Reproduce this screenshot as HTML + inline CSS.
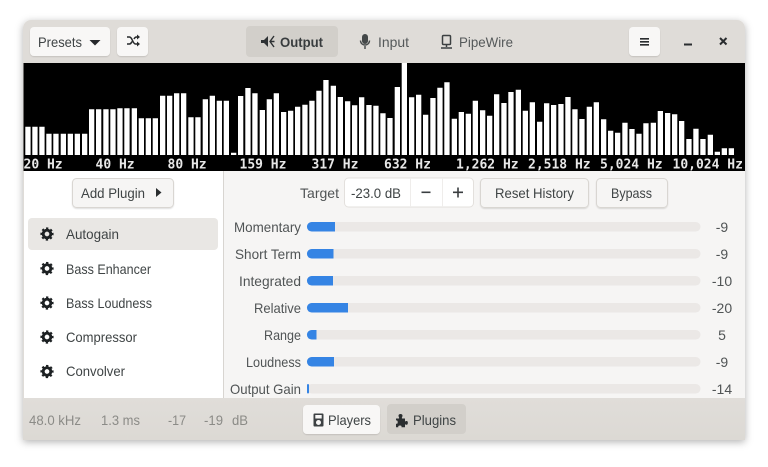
<!DOCTYPE html>
<html lang="en">
<head>
<meta charset="utf-8">
<title>EasyEffects</title>
<style>
html,body{margin:0;padding:0;width:768px;height:467px;background:#fff;overflow:hidden}
svg{display:block;position:absolute;left:0;top:0;filter:blur(0.35px)}
text{font-family:"Liberation Sans",sans-serif;font-size:14px;fill:#3f4445}
.dim{fill:#8b8b87}
.mono{font-family:"DejaVu Sans Mono",monospace;font-size:13px;font-weight:bold;fill:#e8e8e8}
.r{text-anchor:end}
.m{text-anchor:middle}
.track{fill:#ebe8e6}
.fill{fill:#3584e4}
</style>
</head>
<body>
<svg width="768" height="467" viewBox="0 0 768 467" xmlns="http://www.w3.org/2000/svg">
<defs>
<filter id="sh" x="-10%" y="-10%" width="120%" height="120%"><feDropShadow dx="0" dy="2" stdDeviation="4" flood-color="#000" flood-opacity=".3"/></filter>
<filter id="bs" x="-10%" y="-20%" width="120%" height="140%"><feDropShadow dx="0" dy="1" stdDeviation=".6" flood-color="#000" flood-opacity=".12"/></filter>
<linearGradient id="foot" x1="0" y1="0" x2="0" y2="1"><stop offset="0" stop-color="#e0ddd9"/><stop offset="1" stop-color="#dcd9d4"/></linearGradient>
<g id="gear">
<circle r="3.800" fill="none" stroke="#1c2022" stroke-width="2.900"/>
<circle r="5.600" fill="none" stroke="#1c2022" stroke-width="2" stroke-dasharray="2.200 2.198" transform="rotate(-11)"/>
</g>
</defs>

<!-- window -->
<path d="M23 28a8 8 0 0 1 8-8h706a8 8 0 0 1 8 8v412H23z" fill="#dfdcd8" filter="url(#sh)"/>
<rect x="24" y="171" width="199" height="227" fill="#fff"/>
<rect x="223" y="171" width="522" height="227" fill="#f6f5f4"/>
<rect x="223" y="171" width="1" height="227" fill="#d8d5d1"/>
<rect x="23" y="398" width="722" height="42" fill="url(#foot)"/>

<!-- header -->
<rect x="30" y="27" width="80" height="29" rx="4" fill="#f8f7f6" filter="url(#bs)"/>
<text x="38" y="47" textLength="44" lengthAdjust="spacingAndGlyphs">Presets</text>
<path d="M89.500 40h11l-5.500 5.500z" fill="#26292b"/>
<rect x="117" y="27" width="31" height="29" rx="4" fill="#f8f7f6" filter="url(#bs)"/>
<path d="M127 37h2.500c3 0 3 7 6 7h2M127 44h2.500c1.200 0 1.900-1.200 2.500-2.500M134 39c.5-1 1.200-2 2.500-2h1.500" fill="none" stroke="#26292b" stroke-width="1.500"/>
<path d="M137 34.500l3 2.500-3 2.500zM137 41.500l3 2.500-3 2.500z" fill="#26292b"/>

<rect x="246" y="26" width="92" height="31" rx="4" fill="#d2cfca"/>
<path d="M261 40h3l4-4v11l-4-4h-3z" fill="#2e3234"/>
<path d="M274 36l-4 5.500 4 5.500M270.500 41.500h4" fill="none" stroke="#2e3234" stroke-width="1.400"/>
<text x="280" y="47" textLength="43" lengthAdjust="spacingAndGlyphs" font-weight="bold" style="font-weight:bold;fill:#383c3e">Output</text>

<rect x="362" y="34" width="6" height="10" rx="3" fill="#444849"/>
<path d="M360.500 40.500c0 6 9 6 9 0M365 46v3" fill="none" stroke="#444849" stroke-width="1.400"/>
<text x="378" y="47" textLength="31" lengthAdjust="spacingAndGlyphs" style="fill:#55595a">Input</text>

<rect x="442.500" y="35.500" width="8" height="9" rx="1" fill="none" stroke="#3c4042" stroke-width="1.500"/>
<path d="M446.500 45v2M441 48h11" stroke="#3c4042" stroke-width="1.500" fill="none"/>
<text x="459" y="47" textLength="54" lengthAdjust="spacingAndGlyphs" style="fill:#55595a">PipeWire</text>

<rect x="629" y="27" width="31" height="29" rx="4" fill="#f8f7f6" filter="url(#bs)"/>
<path d="M640 38h9v1.600h-9zM640 41h9v1.600h-9zM640 44h9v1.600h-9z" fill="#2a2d2f"/>
<rect x="684" y="43.500" width="8" height="2" fill="#2a2d2f"/>
<path d="M720 38l6.500 6.500M726.500 38l-6.500 6.500" stroke="#2a2d2f" stroke-width="2" fill="none"/>

<!-- spectrum -->
<rect x="23.500" y="63" width="721.500" height="108" fill="#000"/>
<g fill="#fff">
<path d="M25.300 126.700h5.300V155h-5.300zM32.300 126.700h5.300V155h-5.300zM39.300 126.700h5.300V155h-5.300zM46.300 133.700h5.300V155h-5.300zM53.300 133.700h5.300V155h-5.300zM60.700 133.700h5.300V155h-5.300zM67.700 133.700h5.300V155h-5.300zM74.700 133.700h5.300V155h-5.300zM82 133.700h5.300V155H82zM89 109.300h5.300V155H89zM96 109.300h5.300V155H96zM103.300 109.300h5.300V155h-5.300zM110.300 109.300h5.300V155h-5.300zM117.300 108.300h5.300V155h-5.300zM124.300 108.300h5.300V155h-5.300zM131.700 108.300h5.300V155h-5.300zM138.700 118.300h5.300V155h-5.300zM145.700 118.300h5.300V155h-5.300zM152.700 118.300h5.300V155h-5.300zM160 95.700h5.300V155H160zM167 95.700h5.300V155H167zM174 93.300h5.300V155H174zM181 93.300h5.300V155H181zM188.300 117.300h5.300V155h-5.300zM195.300 117.300h5.300V155h-5.300zM202.700 99.300h5.300V155h-5.300zM209.700 95.700h5.300V155h-5.300zM216.700 100.700h5.300V155h-5.300zM223.700 100.700h5.300V155h-5.300zM231 152.700h5.300V155H231zM238 96h5.300v59H238zM245.300 88h5.300v67h-5.300zM252.300 93.300h5.300V155h-5.300z"/>
<path d="M259.700 110h5.300v45h-5.300zM266.700 99.300h5.300V155h-5.300zM273.700 93.300h5.300V155h-5.300zM281 112h5.300v43H281zM288 110.700h5.300V155H288zM295 106.700h5.300V155H295zM302.300 104.700h5.300V155h-5.300zM309.300 100.700h5.300V155h-5.300zM316.300 90.700h5.300V155h-5.300zM323.300 80h5.300v75h-5.300zM330.700 85.700h5.300V155h-5.300zM337.700 97h5.300v58h-5.300zM345 101.300h5.300V155H345zM352 105.300h5.300V155H352zM359 97.300h5.300V155H359zM366.300 105h5.300v50h-5.300zM373.300 105.700h5.300V155h-5.300zM380.300 113.300h5.300V155h-5.300zM387.300 118h5.300v37h-5.300zM394.700 87h5.300v68h-5.300zM401.700 63h5.300v92h-5.300zM409 97.300h5.300V155H409zM416 94.700h5.300V155H416zM423 114.700h5.300V155H423zM430.300 98h5.300v57h-5.300zM437.300 87.700h5.300V155h-5.300zM444.300 82.300h5.300V155h-5.300zM451.700 118.700h5.300V155h-5.300zM458.700 112h5.300v43h-5.300zM465.700 113.700h5.300V155h-5.300zM472.700 100.700h5.300V155h-5.300zM480 110.300h5.300V155H480zM487 115.700h5.300V155H487zM494 94.300h5.300V155H494zM501.300 103h5.300v52h-5.300zM508.300 92h5.300v63h-5.300z"/>
<path d="M515.700 89.700h5.300V155h-5.300zM522.700 110.700h5.300V155h-5.300zM529.700 102.300h5.300V155h-5.300zM537 121.700h5.300V155H537zM544 103.300h5.300V155H544zM551 105h5.300v50H551zM558.300 104h5.300v51h-5.300zM565.300 97h5.300v58h-5.300zM572.300 109.300h5.300V155h-5.300zM579.300 119h5.300v36h-5.300zM586.700 106.700h5.300V155h-5.300zM593.700 102.300h5.300V155h-5.300zM601 119.300h5.300V155H601zM608 130.700h5.300V155H608zM615 132.700h5.300V155H615zM622.300 122.700h5.300V155h-5.300zM629.300 129h5.300v26h-5.300zM636.300 133.700h5.300V155h-5.300zM643.300 123.300h5.300V155h-5.300zM650.700 122.700h5.300V155h-5.300zM657.700 111h5.300v44h-5.300zM665 113h5.300v42H665zM672 114.300h5.300V155H672zM679 121h5.300v34H679zM686.300 139h5.300v16h-5.300zM693.300 128.700h5.300V155h-5.300zM700.300 139h5.300v16h-5.300zM707.700 134.700h5.300V155h-5.300zM714.700 151.700h5.300V155h-5.300zM721.700 148.300h5.300V155h-5.300zM728.700 148.300h5.300V155h-5.300z"/>
</g>
<g class="labels">
<text class="mono" x="23.500" y="168.500">20 Hz</text>
<text class="mono" x="95.500" y="168.500">40 Hz</text>
<text class="mono" x="167.500" y="168.500">80 Hz</text>
<text class="mono" x="239.500" y="168.500">159 Hz</text>
<text class="mono" x="311.500" y="168.500">317 Hz</text>
<text class="mono" x="384" y="168.500">632 Hz</text>
<text class="mono" x="456" y="168.500">1,262 Hz</text>
<text class="mono" x="528" y="168.500">2,518 Hz</text>
<text class="mono" x="600" y="168.500">5,024 Hz</text>
<text class="mono" x="672.500" y="168.500">10,024 Hz</text>
</g>

<!-- sidebar -->
<rect x="72.500" y="178.500" width="101" height="29" rx="4" fill="#f6f5f4" stroke="#d9d6d2" filter="url(#bs)"/>
<text x="81" y="198" textLength="64" lengthAdjust="spacingAndGlyphs">Add Plugin</text>
<path d="M156 188l5.500 4.500-5.500 4.500z" fill="#2a2d2f"/>

<rect x="28" y="218" width="190" height="32" rx="4" fill="#e9e7e4"/>
<use href="#gear" x="47" y="234"/>
<text x="66" y="239" textLength="53" lengthAdjust="spacingAndGlyphs">Autogain</text>
<use href="#gear" x="47" y="268.500"/>
<text x="66" y="274" textLength="85" lengthAdjust="spacingAndGlyphs">Bass Enhancer</text>
<use href="#gear" x="47" y="303"/>
<text x="66" y="308" textLength="86" lengthAdjust="spacingAndGlyphs">Bass Loudness</text>
<use href="#gear" x="47" y="337"/>
<text x="66" y="342" textLength="71" lengthAdjust="spacingAndGlyphs">Compressor</text>
<use href="#gear" x="47" y="371.500"/>
<text x="66" y="376" textLength="59" lengthAdjust="spacingAndGlyphs">Convolver</text>

<!-- controls -->
<text x="300" y="198" textLength="39" lengthAdjust="spacingAndGlyphs" style="fill:#505455">Target</text>
<rect x="344.500" y="178" width="129" height="29" rx="4" fill="#fff" stroke="#e3e0dd"/>
<path d="M410.500 178v29M442.500 178v29" stroke="#efedeb"/>
<text x="351" y="198" textLength="50" lengthAdjust="spacingAndGlyphs">-23.0 dB</text>
<rect x="421.500" y="191.500" width="9" height="1.600" fill="#3a3e40"/>
<path d="M453 192.300h10M458 187.500v10" stroke="#3a3e40" stroke-width="1.600" fill="none"/>
<rect x="480.500" y="178.500" width="108" height="29" rx="4" fill="#f6f5f4" stroke="#d9d6d2" filter="url(#bs)"/>
<text x="495" y="198" textLength="79" lengthAdjust="spacingAndGlyphs">Reset History</text>
<rect x="596.500" y="178.500" width="71" height="29" rx="4" fill="#f6f5f4" stroke="#d9d6d2" filter="url(#bs)"/>
<text x="611" y="198" textLength="41" lengthAdjust="spacingAndGlyphs">Bypass</text>

<!-- meters -->
<rect class="track" x="307" y="222" width="393.500" height="9.500" rx="4.700"/>
<path class="fill" d="M311.700 222H335v9.500h-23.300a4.700 4.700 0 0 1 0-9.500z"/>
<rect class="track" x="307" y="249" width="393.500" height="9.500" rx="4.700"/>
<path class="fill" d="M311.700 249H333.500v9.500h-21.800a4.700 4.700 0 0 1 0-9.500z"/>
<rect class="track" x="307" y="276" width="393.500" height="9.500" rx="4.700"/>
<path class="fill" d="M311.700 276H333v9.500h-21.300a4.700 4.700 0 0 1 0-9.500z"/>
<rect class="track" x="307" y="303" width="393.500" height="9.500" rx="4.700"/>
<path class="fill" d="M311.700 303H348v9.500h-36.300a4.700 4.700 0 0 1 0-9.500z"/>
<rect class="track" x="307" y="330" width="393.500" height="9.500" rx="4.700"/>
<path class="fill" d="M311.700 330H316.500v9.500h-4.800a4.700 4.700 0 0 1 0-9.500z"/>
<rect class="track" x="307" y="357" width="393.500" height="9.500" rx="4.700"/>
<path class="fill" d="M311.700 357H334v9.500h-22.300a4.700 4.700 0 0 1 0-9.500z"/>
<rect class="track" x="307" y="384" width="393.500" height="9.500" rx="4.700"/>
<rect class="fill" x="307" y="384" width="2" height="9.500" rx="1"/>

<text class="r" x="301" y="232" textLength="67" lengthAdjust="spacingAndGlyphs" style="fill:#505455">Momentary</text>
<text class="r" x="301" y="259" textLength="66" lengthAdjust="spacingAndGlyphs" style="fill:#505455">Short Term</text>
<text class="r" x="301" y="286" textLength="62" lengthAdjust="spacingAndGlyphs" style="fill:#505455">Integrated</text>
<text class="r" x="301" y="313" textLength="47" lengthAdjust="spacingAndGlyphs" style="fill:#505455">Relative</text>
<text class="r" x="301" y="340" textLength="37" lengthAdjust="spacingAndGlyphs" style="fill:#505455">Range</text>
<text class="r" x="301" y="367" textLength="55" lengthAdjust="spacingAndGlyphs" style="fill:#505455">Loudness</text>
<text class="r" x="301" y="394" textLength="71" lengthAdjust="spacingAndGlyphs" style="fill:#505455">Output Gain</text>

<text class="m" x="722" y="232" style="fill:#505455">-9</text>
<text class="m" x="722" y="259" style="fill:#505455">-9</text>
<text class="m" x="722" y="286" style="fill:#505455">-10</text>
<text class="m" x="722" y="313" style="fill:#505455">-20</text>
<text class="m" x="722" y="340" style="fill:#505455">5</text>
<text class="m" x="722" y="367" style="fill:#505455">-9</text>
<text class="m" x="722" y="394" style="fill:#505455">-14</text>

<!-- footer -->
<text class="dim" x="29" y="425" textLength="52" lengthAdjust="spacingAndGlyphs">48.0 kHz</text>
<text class="dim" x="101" y="425" textLength="39" lengthAdjust="spacingAndGlyphs">1.3 ms</text>
<text class="dim" x="168" y="425" textLength="18" lengthAdjust="spacingAndGlyphs">-17</text>
<text class="dim" x="204" y="425" textLength="19" lengthAdjust="spacingAndGlyphs">-19</text>
<text class="dim" x="232" y="425" textLength="16" lengthAdjust="spacingAndGlyphs">dB</text>

<rect x="303" y="405" width="77" height="29" rx="4" fill="#f8f7f6" filter="url(#bs)"/>
<path fill-rule="evenodd" d="M314.500 413.500h8a1 1 0 0 1 1 1v11a1 1 0 0 1-1 1h-8a1 1 0 0 1-1-1v-11a1 1 0 0 1 1-1zm.800 1.500v3.500h6.400V415zm3.200 5a2.500 2.500 0 1 0 0 5 2.500 2.500 0 0 0 0-5z" fill="#3d4143"/>
<text x="328" y="425" textLength="43" lengthAdjust="spacingAndGlyphs">Players</text>
<rect x="387" y="404" width="79" height="30" rx="4" fill="#d2cfca"/>
<path d="M396 418.500h3c.5-1-.5-1.500-.5-3 0-1 1-1.500 2-1.500s2 .5 2 1.500c0 1.500-1 2-.5 3h3v3c1-.5 1.500-.8 2.300-.3s.7 2.800 0 3.300-1.300.2-2.300-.3v3h-3.500c.3-1.200-.2-1.700-1.500-1.700s-2 .5-1.700 1.700H396v-3.500c1.200.3 1.700-.2 1.700-1.500s-.5-2-1.700-1.700z" fill="#2a2e30"/>
<text x="413" y="425" textLength="43" lengthAdjust="spacingAndGlyphs">Plugins</text>
</svg>
</body>
</html>
